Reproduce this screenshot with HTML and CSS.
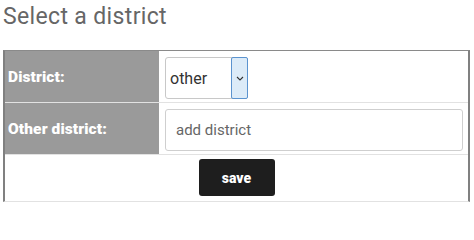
FILE: index.html
```html
<!DOCTYPE html>
<html lang="en">
<head>
<meta charset="utf-8">
<title>Select a district</title>
<link rel="stylesheet" href="styles.css">
</head>
<body>
<h1 class="title">Select a district</h1>
<form class="district-form">
  <div class="row">
    <label class="label" for="district">District:</label>
    <div class="field">
      <div class="select">
        <select id="district" class="select-native">
          <option>other</option>
        </select>
        <span class="select-arrow"><svg width="8" height="5" viewBox="0 0 8 5"><path d="M1 1 L4 4 L7 1" fill="none" stroke="#333" stroke-width="1.1"/></svg></span>
      </div>
    </div>
  </div>
  <div class="row">
    <label class="label" for="other">Other district:</label>
    <div class="field">
      <input id="other" class="text-input" type="text" placeholder="add district">
    </div>
  </div>
  <div class="row row-actions">
    <button type="button" class="btn-save">save</button>
  </div>
</form>
</body>
</html>
```
FILE: styles.css
```css
* { box-sizing: border-box; }
html, body { margin: 0; padding: 0; background: #fff; }
body { padding: 0 5px 0 3px; font-family: Roboto, "Liberation Sans", sans-serif; }

.title {
  margin: 4px 0 20px;
  font-size: 23px;
  line-height: 26px;
  font-weight: 400;
  letter-spacing: 0.35px;
  color: #666;
}

.district-form {
  width: 467px;
  border-top: 1px solid #8a8a8a;
  border-left: 2px solid #808080;
  border-right: 2px solid #808080;
  border-bottom: 1px solid #e2e2e2;
}

.row {
  display: grid;
  grid-template-columns: 154px 1fr;
  border-bottom: 1px solid #e2e2e2;
}
.row:last-child { border-bottom: none; }

.label {
  display: flex;
  align-items: center;
  padding-left: 3px;
  background: #9a9a9a;
  color: #fff;
  font-weight: 900;
  font-size: 15.5px;
  letter-spacing: 0.1px;
  height: 51px;
}

.field {
  display: flex;
  align-items: center;
  padding: 3px 4px 0 6px;
}

.select {
  display: flex;
  width: 83px;
  height: 42px;
  border: 1px solid #c8c8c8;
  border-radius: 3px;
  background: #fff;
}
.select-native {
  appearance: none;
  -webkit-appearance: none;
  flex: 1;
  min-width: 0;
  border: none;
  background: transparent;
  padding: 0 0 0 4px;
  font-family: Roboto, "Liberation Sans", sans-serif;
  font-size: 16px;
  color: #333;
  outline: none;
}
.select-arrow {
  display: flex;
  align-items: center;
  justify-content: center;
  width: 17px;
  margin: -1px -1px -1px 0;
  background: #dcebf8;
  border: 1px solid #5b93cf;
  border-radius: 2px;
}

.text-input {
  width: 298px;
  height: 42px;
  border: 1px solid #cfcfcf;
  border-radius: 3px;
  padding: 0 10px;
  font-family: Roboto, "Liberation Sans", sans-serif;
  font-size: 15px;
  color: #333;
}
.text-input::placeholder { color: #666; }

.row-actions {
  display: flex;
  justify-content: center;
  padding: 4px 0 5px;
}

.btn-save {
  width: 76px;
  height: 37px;
  border: none;
  border-radius: 3px;
  background: #1e1e1e;
  color: #fff;
  font-family: Roboto, "Liberation Sans", sans-serif;
  font-weight: 900;
  font-size: 14px;
  cursor: pointer;
}
```
